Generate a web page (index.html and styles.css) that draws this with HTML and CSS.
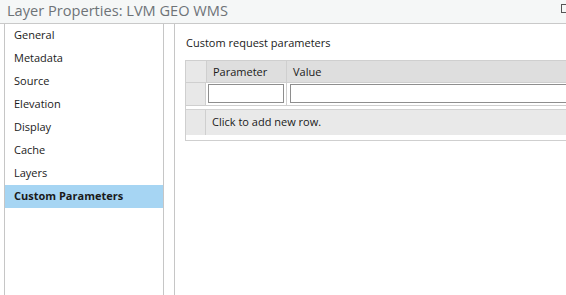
FILE: index.html
```html
<!DOCTYPE html>
<html lang="en">
<head>
    <meta charset="UTF-8">
    <title>Layer Properties</title>
    <link rel="stylesheet" href="styles.css">
</head>
<body>
    <div class="title-bar">
        <span class="title">Layer Properties: LVM GEO WMS</span>
        <span class="win-btn"></span>
    </div>

    <div class="main">
        <!-- Menu lateral -->
        <ul class="nav">
            <li>General</li>
            <li>Metadata</li>
            <li>Source</li>
            <li>Elevation</li>
            <li>Display</li>
            <li>Cache</li>
            <li>Layers</li>
            <li class="active">Custom Parameters</li>
        </ul>

        <div class="content">
            <p class="section-title">Custom request parameters</p>

            <div class="grid">
                <div class="grid-row head">
                    <div class="row-head"></div>
                    <div class="cell col-param">Parameter</div>
                    <div class="cell col-value">Value</div>
                </div>
                <div class="grid-row data">
                    <div class="row-head"></div>
                    <div class="cell col-param"><input type="text"></div>
                    <div class="cell col-value"><input type="text" class="open-right"></div>
                </div>
                <div class="grid-row new-row">
                    <div class="row-head"></div>
                    <div class="cell">Click to add new row.</div>
                </div>
            </div>
        </div>
    </div>
</body>
</html>
```

FILE: styles.css
```css
* {
    margin: 0;
    padding: 0;
    box-sizing: border-box;
}

body {
    width: 566px;
    height: 295px;
    background: #fff;
    font-family: 'Open Sans', 'Noto Sans', sans-serif;
    font-size: 11px;
    color: #1a1a1a;
    overflow: hidden;
}

.title-bar {
    height: 24px;
    background: #f5f7f7;
    border-bottom: 1px solid #c9c9c9;
    display: flex;
    align-items: center;
    justify-content: space-between;
    padding-left: 7px;
}

.title {
    color: #6e7377;
    font-size: 14.6px;
    line-height: 20px;
    margin-top: -4px;
}

/* Botón de ventana (cortado en el borde) */
.win-btn {
    width: 5px;
    height: 9px;
    border: 1px solid #555;
    border-right: none;
    margin-top: -6px;
}

.main {
    display: flex;
    padding-left: 4px;
    height: 271px;
}

.nav {
    list-style: none;
    width: 160px;
    flex-shrink: 0;
    border-left: 1px solid #c6c6c6;
    border-right: 1px solid #c6c6c6;
}

.nav li {
    height: 23px;
    line-height: 22px;
    padding-left: 9px;
    white-space: nowrap;
}

.nav li.active {
    background: #a6d5f3;
    font-weight: bold;
}

.content {
    flex: 1;
    min-width: 0;
    margin-left: 10px;
    border-left: 1px solid #c6c6c6;
    padding: 11px 0 0 11px;
}

.section-title {
    line-height: 16px;
    margin-bottom: 9px;
}

.grid {
    margin-left: -1px;
    width: calc(100% + 1px);
    height: 81px;
    border: 1px solid #cfcfcf;
    border-right: none;
}

.grid-row {
    display: flex;
}

.row-head {
    width: 20px;
    flex-shrink: 0;
    background: #e8e8e8;
}

.cell {
    padding-left: 6px;
}

.col-param {
    width: 80px;
    flex-shrink: 0;
    border-left: 1px solid #cfcfcf;
}

.col-value {
    flex: 1;
    border-left: 1px solid #cfcfcf;
}

.head {
    height: 22px;
    background: #dedede;
    border-bottom: 1px solid #cfcfcf;
}

.head .row-head {
    background: #e8e8e8;
}

.head .cell {
    line-height: 21px;
}

.data {
    height: 23px;
    border-bottom: 1px solid #cfcfcf;
}

.data .row-head {
    border-right: 1px solid #cfcfcf;
}

.data .cell {
    padding: 1px 2px 3px 2px;
    border-left: none;
}

.data .col-value {
    padding: 1px 0 3px 3px;
    border-left: 1px solid #cfcfcf;
}

.data input {
    display: block;
    width: 100%;
    height: 19px;
    border: 1px solid #8e8e8e;
    outline: none;
}

.data input.open-right {
    border-right: none;
}

.new-row {
    margin-top: 3px;
    height: 26px;
    background: #e9e9e9;
    border-top: 1px solid #d2d2d2;
}

.new-row .row-head {
    border-right: 1px solid #cfcfcf;
}

.new-row .cell {
    line-height: 24px;
}
```
